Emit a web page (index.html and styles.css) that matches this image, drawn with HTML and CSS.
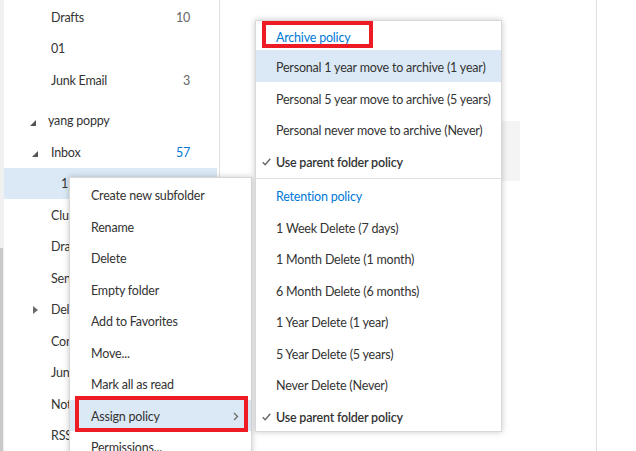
FILE: index.html
```html
<!DOCTYPE html>
<html lang="en">
<head>
<meta charset="utf-8">
<title>Assign policy</title>
<link rel="stylesheet" href="styles.css">
</head>
<body>
<div class="app">
  <div class="rail"><div class="thumb"></div></div>
  <nav class="folders">
    <ul class="folder-list">
      <li class="folder"><span class="name">Drafts</span><span class="count">10</span></li>
      <li class="folder"><span class="name">01</span></li>
      <li class="folder"><span class="name">Junk Email</span><span class="count">3</span></li>
      <li class="folder group">
        <span class="caret caret-open"><svg width="6" height="6" viewBox="0 0 6 6"><polygon points="6,0 6,6 0,6" fill="#555"/></svg></span>
        <span class="name">yang poppy</span>
      </li>
      <li class="folder parent">
        <span class="caret caret-open"><svg width="6" height="6" viewBox="0 0 6 6"><polygon points="6,0 6,6 0,6" fill="#555"/></svg></span>
        <span class="name">Inbox</span><span class="count unread">57</span>
      </li>
      <li class="folder child selected"><span class="name">111</span></li>
      <li class="folder"><span class="name">Clutter</span></li>
      <li class="folder"><span class="name">Drafts</span></li>
      <li class="folder"><span class="name">Sent Items</span></li>
      <li class="folder parent-closed">
        <span class="caret caret-closed"><svg width="5" height="8" viewBox="0 0 5 8"><polygon points="0,0 5,4 0,8" fill="#6b6b6b"/></svg></span>
        <span class="name">Deleted Items</span>
      </li>
      <li class="folder"><span class="name">Conversation History</span></li>
      <li class="folder"><span class="name">Junk Email</span></li>
      <li class="folder"><span class="name">Notes</span></li>
      <li class="folder"><span class="name">RSS Subscriptions</span></li>
    </ul>
  </nav>
  <main class="content">
    <div class="preview-card"></div>
  </main>
</div>

<div class="ctx-menu">
  <div class="ctx-item">Create new subfolder</div>
  <div class="ctx-item">Rename</div>
  <div class="ctx-item">Delete</div>
  <div class="ctx-item">Empty folder</div>
  <div class="ctx-item">Add to Favorites</div>
  <div class="ctx-item">Move...</div>
  <div class="ctx-item">Mark all as read</div>
  <div class="ctx-item active">Assign policy<span class="chevron"><svg width="6" height="9" viewBox="0 0 6 9"><polyline points="1,1 4.5,4.5 1,8" fill="none" stroke="#6a6a6a" stroke-width="1.3"/></svg></span></div>
  <div class="ctx-item">Permissions...</div>
</div>

<div class="sub-menu">
  <div class="sub-head first">Archive policy</div>
  <div class="sub-item active">Personal 1 year move to archive (1 year)</div>
  <div class="sub-item">Personal 5 year move to archive (5 years)</div>
  <div class="sub-item">Personal never move to archive (Never)</div>
  <div class="sub-item checked"><span class="check"><svg width="9" height="8" viewBox="0 0 9 8"><polyline points="0.7,4.2 3.2,6.8 8.3,0.8" fill="none" stroke="#666" stroke-width="1.4"/></svg></span>Use parent folder policy</div>
  <div class="sep"></div>
  <div class="sub-head">Retention policy</div>
  <div class="sub-item">1 Week Delete (7 days)</div>
  <div class="sub-item">1 Month Delete (1 month)</div>
  <div class="sub-item">6 Month Delete (6 months)</div>
  <div class="sub-item">1 Year Delete (1 year)</div>
  <div class="sub-item">5 Year Delete (5 years)</div>
  <div class="sub-item">Never Delete (Never)</div>
  <div class="sub-item checked"><span class="check"><svg width="9" height="8" viewBox="0 0 9 8"><polyline points="0.7,4.2 3.2,6.8 8.3,0.8" fill="none" stroke="#666" stroke-width="1.4"/></svg></span>Use parent folder policy</div>
</div>

<div class="annot annot-archive"></div>
<div class="annot annot-assign"></div>
</body>
</html>
```

FILE: styles.css
```css
html, body {
  margin: 0;
  padding: 0;
}

body {
  position: relative;
  width: 636px;
  height: 451px;
  overflow: hidden;
  background: #fff;
  color: #333;
  font-family: Lato, "Liberation Sans", Arial, sans-serif;
  font-size: 12.5px;
  letter-spacing: -0.2px;
}

.app {
  display: flex;
  height: 451px;
}

/* left rail with scrollbar thumb */
.rail {
  width: 4px;
  background: #f0f0f0;
  display: flex;
  flex-direction: column;
}

.rail .thumb {
  margin-top: 248px;
  width: 3px;
  flex: 1;
  background: #c8c8c8;
}

/* folder pane */
.folders {
  width: 215px;
  border-right: 1px solid #e1e1e1;
}

.folder-list {
  list-style: none;
  margin: 0;
  padding: 1px 2px 0 0;
}

.folder {
  height: 31.5px;
  box-sizing: border-box;
  display: flex;
  align-items: center;
  padding-left: 47px;
  padding-right: 27px;
  padding-top: 1px;
  white-space: nowrap;
}

.folder .name {
  flex: 1;
}

.folder .count {
  color: #666;
}

.folder .count.unread {
  color: #0078d7;
}

.folder.group {
  margin-top: 9px;
  padding-left: 26px;
}

.folder.group .caret {
  width: 18px;
}

.folder.parent {
  padding-left: 28px;
}

.folder.parent .caret {
  width: 19px;
}

.folder.parent-closed {
  padding-left: 29px;
}

.folder.parent-closed .caret {
  width: 18px;
}

.caret {
  display: flex;
  align-items: center;
}

.caret-open svg {
  margin-top: 4px;
}

.caret-closed svg {
  margin-top: 0;
}

.folder.child {
  padding-left: 57px;
}

.folder.selected {
  background: #dbe9f6;
}

/* main content */
.content {
  width: 377px;
  border-right: 1px solid #e1e1e1;
  padding-top: 121px;
  box-sizing: border-box;
}

.preview-card {
  margin-left: 80px;
  width: 220px;
  height: 60px;
  background: #f4f4f4;
}

/* context menu */
.ctx-menu {
  position: absolute;
  left: 69px;
  top: 177px;
  width: 181px;
  padding-top: 1px;
  background: #fff;
  border: 1px solid #d8d8d8;
  box-shadow: 0 0 6px rgba(0, 0, 0, 0.22);
}

.ctx-item {
  height: 31.5px;
  box-sizing: border-box;
  display: flex;
  align-items: center;
  padding: 2px 12px 0 21px;
  white-space: nowrap;
}

.ctx-item.active {
  background: #dbe9f6;
}

.ctx-item .chevron {
  margin-left: auto;
  display: flex;
  margin-top: 1px;
}

/* submenu */
.sub-menu {
  position: absolute;
  left: 255px;
  top: 20px;
  width: 245px;
  background: #fff;
  border: 1px solid #d8d8d8;
  box-shadow: 0 0 6px rgba(0, 0, 0, 0.22);
}

.sub-head {
  height: 31.5px;
  box-sizing: border-box;
  display: flex;
  align-items: center;
  padding: 4px 0 0 20px;
  color: #0078d7;
}

.sub-head.first {
  height: 29px;
  padding-top: 3px;
}

.sub-item {
  height: 31.5px;
  box-sizing: border-box;
  display: flex;
  align-items: center;
  padding: 4px 0 0 20px;
  white-space: nowrap;
}

.sub-item.active {
  background: #dbe9f6;
}

.sub-item.checked {
  font-weight: 600;
}

.sub-item .check {
  width: 14px;
  margin-left: -14px;
  display: flex;
  align-items: center;
  box-sizing: border-box;
  margin-top: -1px;
}

.sep {
  height: 1px;
  margin-top: 2px;
  background: #e1e1e1;
}

/* red annotation boxes */
.annot {
  position: absolute;
  box-sizing: border-box;
  border: 4px solid #ed1c24;
}

.annot-archive {
  left: 262px;
  top: 21px;
  width: 111px;
  height: 27px;
}

.annot-assign {
  left: 75px;
  top: 396px;
  width: 173px;
  height: 36px;
}
```
